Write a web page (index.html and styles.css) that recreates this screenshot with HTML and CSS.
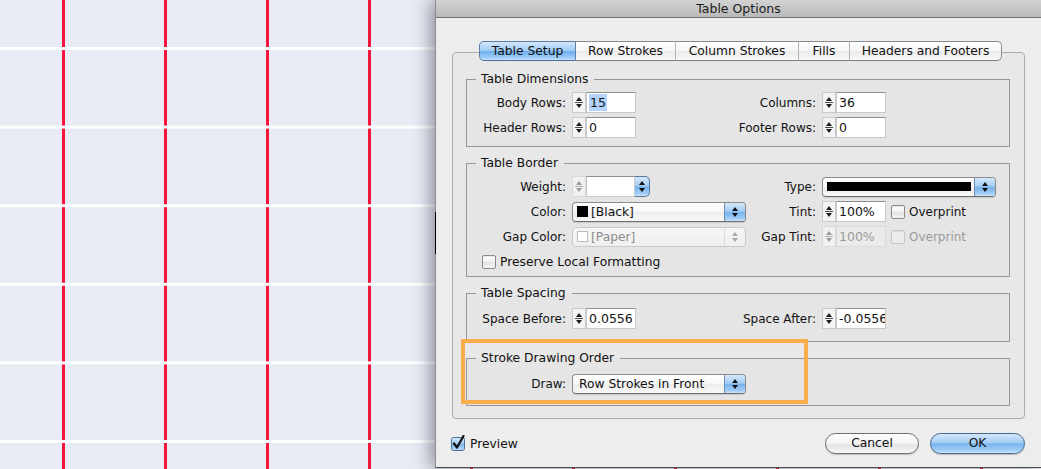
FILE: index.html
```html
<!DOCTYPE html>
<html>
<head>
<meta charset="utf-8">
<title>Table Options</title>
<link rel="stylesheet" href="styles.css">
</head>
<body>
<div class="dialog">
  <div class="titlebar">Table Options</div>
  <div class="content">
    <div class="tabs">
      <span class="tab tab-setup is-selected">Table Setup</span>
      <span class="tab tab-rows">Row Strokes</span>
      <span class="tab tab-cols">Column Strokes</span>
      <span class="tab tab-fills">Fills</span>
      <span class="tab tab-hf">Headers and Footers</span>
    </div>
    <div class="panel">
      <fieldset class="group group-dim">
        <legend>Table Dimensions</legend>
        <div class="form">
          <span class="lbl">Body Rows:</span>
          <span class="ctl"><span class="stepper"></span><span class="field"><span class="hl">15</span></span></span>
          <span class="lbl">Columns:</span>
          <span class="ctl"><span class="stepper"></span><span class="field">36</span></span>
          <span class="lbl">Header Rows:</span>
          <span class="ctl"><span class="stepper"></span><span class="field">0</span></span>
          <span class="lbl">Footer Rows:</span>
          <span class="ctl"><span class="stepper"></span><span class="field">0</span></span>
        </div>
      </fieldset>
      <fieldset class="group group-border">
        <legend>Table Border</legend>
        <div class="form">
          <span class="lbl">Weight:</span>
          <span class="ctl"><span class="stepper is-dim"></span><span class="field field-combo"></span><span class="combo-btn"></span></span>
          <span class="lbl">Type:</span>
          <span class="ctl"><span class="popup"><span class="val"><span class="stroke-sample"></span></span><span class="arr"></span></span></span>
          <span class="lbl">Color:</span>
          <span class="ctl"><span class="popup"><span class="val"><span class="swatch swatch-black"></span>[Black]</span><span class="arr"></span></span></span>
          <span class="lbl">Tint:</span>
          <span class="ctl"><span class="stepper"></span><span class="field">100%</span><span class="cb"></span><span class="cb-label">Overprint</span></span>
          <span class="lbl">Gap Color:</span>
          <span class="ctl"><span class="popup is-disabled"><span class="val"><span class="swatch swatch-paper"></span>[Paper]</span><span class="arr"></span></span></span>
          <span class="lbl">Gap Tint:</span>
          <span class="ctl is-disabled"><span class="stepper is-dim"></span><span class="field">100%</span><span class="cb"></span><span class="cb-label">Overprint</span></span>
          <span class="check-row"><span class="cb"></span><span class="cb-label">Preserve Local Formatting</span></span>
        </div>
      </fieldset>
      <fieldset class="group group-spacing">
        <legend>Table Spacing</legend>
        <div class="form">
          <span class="lbl">Space Before:</span>
          <span class="ctl"><span class="stepper"></span><span class="field">0.0556</span></span>
          <span class="lbl">Space After:</span>
          <span class="ctl"><span class="stepper"></span><span class="field">-0.0556</span></span>
        </div>
      </fieldset>
      <fieldset class="group group-stroke">
        <legend>Stroke Drawing Order</legend>
        <div class="form">
          <span class="lbl">Draw:</span>
          <span class="ctl"><span class="popup popup-draw"><span class="val">Row Strokes in Front</span><span class="arr"></span></span></span>
        </div>
      </fieldset>
    </div>
    <div class="footer">
      <span class="preview">
        <svg class="cb-checked" width="15" height="16" viewBox="0 0 15 16">
          <defs>
            <linearGradient id="aq" x1="0" y1="0" x2="0" y2="1">
              <stop offset="0" stop-color="#d4e8fb"/>
              <stop offset="0.48" stop-color="#a2ccf3"/>
              <stop offset="0.52" stop-color="#78b3ec"/>
              <stop offset="1" stop-color="#c3e0fb"/>
            </linearGradient>
          </defs>
          <rect x="0.5" y="2.5" width="13" height="13" rx="2" fill="url(#aq)" stroke="#4f7096"/>
          <path d="M3 8.5 L6 12.5 L12.5 1" fill="none" stroke="#111" stroke-width="2.2" stroke-linecap="round" stroke-linejoin="round"/>
        </svg>
        <span class="cb-label">Preview</span>
      </span>
      <span class="buttons">
        <span class="btn">Cancel</span>
        <span class="btn btn-ok">OK</span>
      </span>
    </div>
  </div>
  <div class="annotation"></div>
  <span class="edge-mark"></span>
</div>
</body>
</html>
```

FILE: styles.css
```css
* { box-sizing: border-box; }

html, body { margin: 0; padding: 0; }

body {
  width: 1041px;
  height: 469px;
  overflow: hidden;
  font-family: "DejaVu Sans", "Liberation Sans", sans-serif;
  font-size: 12px;
  color: #111;
  background:
    linear-gradient(to bottom, #ffffff 0 3px, transparent 3px) 0 47px / 100% 78.6px repeat,
    linear-gradient(to right, #f3163a 0 3px, transparent 3px) 62px 0 / 102px 100% repeat,
    #e8ebf4;
}

/* ---------- dialog window ---------- */
.dialog {
  position: relative;
  margin-left: 435px;
  width: 606px;
  height: 468px;
  background: #ededed;
  border-left: 1px solid #8b8b8b;
  border-bottom: 1px solid #4a4a4a;
  box-shadow: -5px 0 16px rgba(40, 45, 60, 0.45);
  display: flex;
  flex-direction: column;
}

.titlebar {
  height: 18px;
  line-height: 17px;
  border-bottom: 1px solid #727272;
  background: linear-gradient(#d3d3d3, #bababa);
  text-align: center;
  font-size: 12.5px;
  color: #1a1a1a;
}

.content {
  padding: 23px 16px 0 16px;
  display: flex;
  flex-direction: column;
}

/* ---------- tabs ---------- */
.tabs {
  display: flex;
  justify-content: center;
  height: 20px;
  margin: 0 0 -9px 4px;
  position: relative;
  z-index: 1;
}

.tab {
  height: 20px;
  line-height: 18px;
  text-align: center;
  border-top: 1px solid #8a8a8a;
  border-bottom: 1px solid #7c7c7c;
  border-right: 1px solid #b4b4b4;
  background: linear-gradient(#ffffff, #f6f6f6 50%, #ebebeb 51%, #f8f8f8);
  white-space: nowrap;
  font-size: 12.3px;
}

.tab-setup { width: 97px; border-left: 1px solid #5d7ea5; border-radius: 5px 0 0 5px; }
.tab-rows  { width: 100px; }
.tab-cols  { width: 123px; }
.tab-fills { width: 51px; }
.tab-hf    { width: 152px; border-right-color: #8a8a8a; border-radius: 0 5px 5px 0; }

.tab.is-selected {
  border-top-color: #5d7ea5;
  border-bottom-color: #4e6f97;
  border-right-color: #5d7ea5;
  background: linear-gradient(#d2e7fb, #a0ccf4 48%, #6fadec 52%, #9acbf7 85%, #c6e3fc);
}

/* ---------- tab panel ---------- */
.panel {
  border: 1px solid #ababab;
  border-radius: 4px;
  background: #e8e8e8;
  padding: 18px 14px 12px 13px;
}

.group {
  margin: 0 0 8px 0;
  border: 1px solid #969696;
  background: #e5e5e5;
  min-width: 0;
}

.group:last-child { margin-bottom: 0; }

.group legend {
  margin-left: 9px;
  padding: 0 6px 0 5px;
  line-height: 16px;
  font-size: 12.3px;
}

.group-dim     { padding: 5px 0 8px 0; }
.group-border  { padding: 5px 0 4px 0; }
.group-spacing { padding: 7px 0 12px 0; }
.group-stroke  { padding: 7px 0 11px 0; }

.form {
  display: grid;
  grid-template-columns: 105px 174px 76px 1fr;
  grid-auto-rows: 21px;
  row-gap: 4px;
  align-items: center;
}

.lbl {
  justify-self: end;
  padding-right: 6px;
  white-space: nowrap;
}

.ctl {
  display: flex;
  align-items: center;
  height: 21px;
}

/* ---------- stepper ---------- */
.stepper {
  position: relative;
  width: 14px;
  height: 21px;
  border: 1px solid #c9c9c9;
  background: linear-gradient(#4a4a4a, #4a4a4a) center / 8px 1px no-repeat, #f4f4f4;
  flex: none;
}

.stepper::before,
.stepper::after {
  content: "";
  position: absolute;
  left: 3px;
  border-left: 3px solid transparent;
  border-right: 3px solid transparent;
}

.stepper::before { top: 4px; border-bottom: 4px solid #1e1e1e; }
.stepper::after  { bottom: 4px; border-top: 4px solid #1e1e1e; }

.stepper.is-dim {
  border-color: #dadada;
  background: linear-gradient(#b0b0b0, #b0b0b0) center / 8px 1px no-repeat, #f1f1f1;
}
.stepper.is-dim::before { border-bottom-color: #9a9a9a; }
.stepper.is-dim::after  { border-top-color: #9a9a9a; }

/* ---------- text field ---------- */
.field {
  width: 50px;
  height: 21px;
  background: #fff;
  border: 1px solid #c8c8c8;
  border-top-color: #8f8f8f;
  padding: 0 0 0 2px;
  line-height: 19px;
  overflow: hidden;
  white-space: nowrap;
  flex: none;
  font-size: 12.5px;
}

.hl {
  display: inline-block;
  background: #b5d4fd;
  padding: 0 1px;
  line-height: 17px;
}

.field-combo { width: 49px; }

.combo-btn {
  position: relative;
  width: 15px;
  height: 21px;
  border: 1px solid #58789e;
  border-left: none;
  border-radius: 0 5px 5px 0;
  background: linear-gradient(#d5e8fb, #a4cdf4 45%, #78b3ed 52%, #9ecaf6 85%, #cae4fc);
}

/* ---------- checkbox ---------- */
.cb {
  width: 14px;
  height: 14px;
  border: 1px solid #8a8a8a;
  border-radius: 2px;
  background: linear-gradient(#ffffff, #f1f1f1 50%, #e3e3e3 51%, #f4f4f4);
  box-shadow: inset 0 1px 1px rgba(0, 0, 0, 0.08);
  flex: none;
}

.ctl .cb { margin-left: 5px; }
.ctl .cb-label { margin-left: 4px; }

.ctl.is-disabled .field {
  background: #ebebeb;
  border-color: #dadada;
  color: #9a9a9a;
}
.ctl.is-disabled .cb { border-color: #c6c6c6; background: #ececec; }
.ctl.is-disabled .cb-label { color: #9a9a9a; }

.check-row {
  grid-column: 1 / -1;
  display: flex;
  align-items: center;
  padding-left: 15px;
}

.check-row .cb-label { margin-left: 4px; font-size: 12.3px; }

/* ---------- popup menu ---------- */
.popup {
  display: flex;
  align-items: stretch;
  width: 174px;
  height: 20px;
  border: 1px solid #8b8b8b;
  border-bottom-color: #6c6c6c;
  border-radius: 4px;
  background: linear-gradient(#ffffff, #f7f7f7 50%, #ededed 51%, #f8f8f8);
  box-shadow: 0 1px 1px rgba(0, 0, 0, 0.12);
  overflow: hidden;
}

.popup .val {
  flex: 1;
  display: flex;
  align-items: center;
  gap: 3px;
  padding-left: 4px;
  white-space: nowrap;
  font-size: 12.3px;
}

.popup .arr,
.combo-btn {
  flex: none;
}

.popup .arr {
  position: relative;
  width: 21px;
  border-left: 1px solid #6f8fb5;
  background: linear-gradient(#d5e8fb, #a4cdf4 45%, #78b3ed 52%, #9ecaf6 85%, #cae4fc);
}

.popup .arr::before,
.popup .arr::after,
.combo-btn::before,
.combo-btn::after {
  content: "";
  position: absolute;
  left: 7px;
  border-left: 3px solid transparent;
  border-right: 3px solid transparent;
}

.combo-btn::before,
.combo-btn::after { left: 4px; }

.popup .arr::before,
.combo-btn::before { top: 4px; border-bottom: 4px solid #111; }
.popup .arr::after,
.combo-btn::after { bottom: 4px; border-top: 4px solid #111; }

.popup.is-disabled {
  border-color: #c9c9c9;
  box-shadow: none;
  background: linear-gradient(#f6f6f6, #efefef);
  color: #8c8c8c;
}
.popup.is-disabled .arr {
  border-left: 1px solid #dcdcdc;
  background: transparent;
}
.popup.is-disabled .arr::before { border-bottom-color: #a8a8a8; }
.popup.is-disabled .arr::after  { border-top-color: #a8a8a8; }

.swatch {
  width: 11px;
  height: 11px;
  flex: none;
}
.swatch-black { background: #000; }
.swatch-paper { background: #fff; border: 1px solid #bdbdbd; }

.stroke-sample {
  width: 144px;
  height: 9px;
  background: #000;
}

.popup-draw .val { padding-left: 6px; }

/* ---------- footer ---------- */
.footer {
  display: flex;
  align-items: center;
  margin-top: 14px;
  height: 21px;
}

.preview {
  display: flex;
  align-items: center;
  margin-left: -1px;
  margin-top: -2px;
}

.preview .cb-label { margin-left: 4px; margin-top: 2px; font-size: 12.3px; }

.buttons {
  margin-left: auto;
  display: flex;
  gap: 11px;
}

.btn {
  width: 94px;
  height: 21px;
  line-height: 19px;
  text-align: center;
  border: 1px solid #6e6e6e;
  border-radius: 11px;
  background: linear-gradient(#fefefe, #f3f3f3 50%, #e3e3e3 52%, #f6f6f6);
  box-shadow: 0 1px 1px rgba(0, 0, 0, 0.2);
  font-size: 12.3px;
}

.btn-ok {
  width: 95px;
  border-color: #48698f;
  background: linear-gradient(#d3e7fb, #a4cdf4 45%, #79b4ee 52%, #a0ccf7 85%, #cce5fc);
}

/* ---------- overlays ---------- */
.annotation {
  position: absolute;
  left: 25px;
  top: 339px;
  width: 347px;
  height: 65px;
  border: 4px solid #f9ad4b;
}

.edge-mark {
  position: absolute;
  left: -1px;
  top: 212px;
  width: 1px;
  height: 42px;
  background: #000;
}
```
